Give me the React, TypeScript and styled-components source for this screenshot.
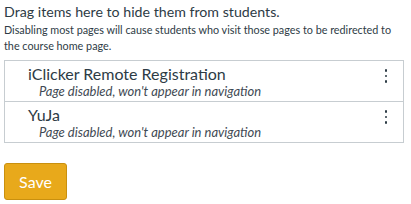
import styled, { createGlobalStyle } from "styled-components";

const GlobalStyle = createGlobalStyle`
  html, body {
    margin: 0;
    padding: 0;
    background: #ffffff;
  }
  body {
    font-family: Lato, "Liberation Sans", sans-serif;
    color: #2d3b45;
  }
`;

const Container = styled.div`
  width: 411px;
  height: 204px;
  box-sizing: border-box;
  padding: 2px 7px 0 4px;
`;

const Heading = styled.div`
  font-size: 14.2px;
  line-height: 20px;
`;

const Hint = styled.p`
  margin: 0;
  font-size: 10.8px;
  line-height: 16px;
  color: #2d3b45;
`;

const List = styled.ul`
  list-style: none;
  margin: 6px 0 0 0;
  padding: 0;
  border: 1px solid #c7cdd1;
  width: 400px;
  box-sizing: border-box;
`;

const Item = styled.li`
  display: flex;
  align-items: flex-start;
  height: 40px;
  box-sizing: content-box;
  padding: 0 9px 0 23px;
  & + & {
    border-top: 1px solid #c7cdd1;
  }
`;

const ItemText = styled.div`
  flex: 1;
  display: flex;
  flex-direction: column;
  padding-top: 4px;
`;

const Title = styled.span`
  font-size: 16px;
  line-height: 18px;
`;

const Subtitle = styled.span`
  font-size: 13px;
  line-height: 16px;
  font-style: italic;
  color: #3f4a54;
  padding-left: 11px;
`;

const Kebab = styled.button`
  border: none;
  background: none;
  padding: 8px 7px;
  display: flex;
  flex-direction: column;
  gap: 3px;
  cursor: pointer;
  span {
    display: block;
    width: 2.5px;
    height: 2.5px;
    background: #2d3b45;
    border-radius: 1px;
  }
`;

const SaveButton = styled.button`
  margin-top: 20px;
  width: 63px;
  height: 37px;
  border: 1px solid #c9900f;
  border-radius: 3px;
  background: #e8a91b;
  color: #ffffff;
  font-family: Lato, "Liberation Sans", sans-serif;
  font-size: 16px;
  padding: 0;
  cursor: pointer;
`;

const items = ["iClicker Remote Registration", "YuJa"];

export default function App() {
  return (
    <Container>
      <GlobalStyle />
      <Heading>Drag items here to hide them from students.</Heading>
      <Hint>
        Disabling most pages will cause students who visit those pages to be
        redirected to the course home page.
      </Hint>
      <List>
        {items.map((name) => (
          <Item key={name}>
            <ItemText>
              <Title>{name}</Title>
              <Subtitle>Page disabled, won't appear in navigation</Subtitle>
            </ItemText>
            <Kebab aria-label="Settings">
              <span />
              <span />
              <span />
            </Kebab>
          </Item>
        ))}
      </List>
      <SaveButton>Save</SaveButton>
    </Container>
  );
}
